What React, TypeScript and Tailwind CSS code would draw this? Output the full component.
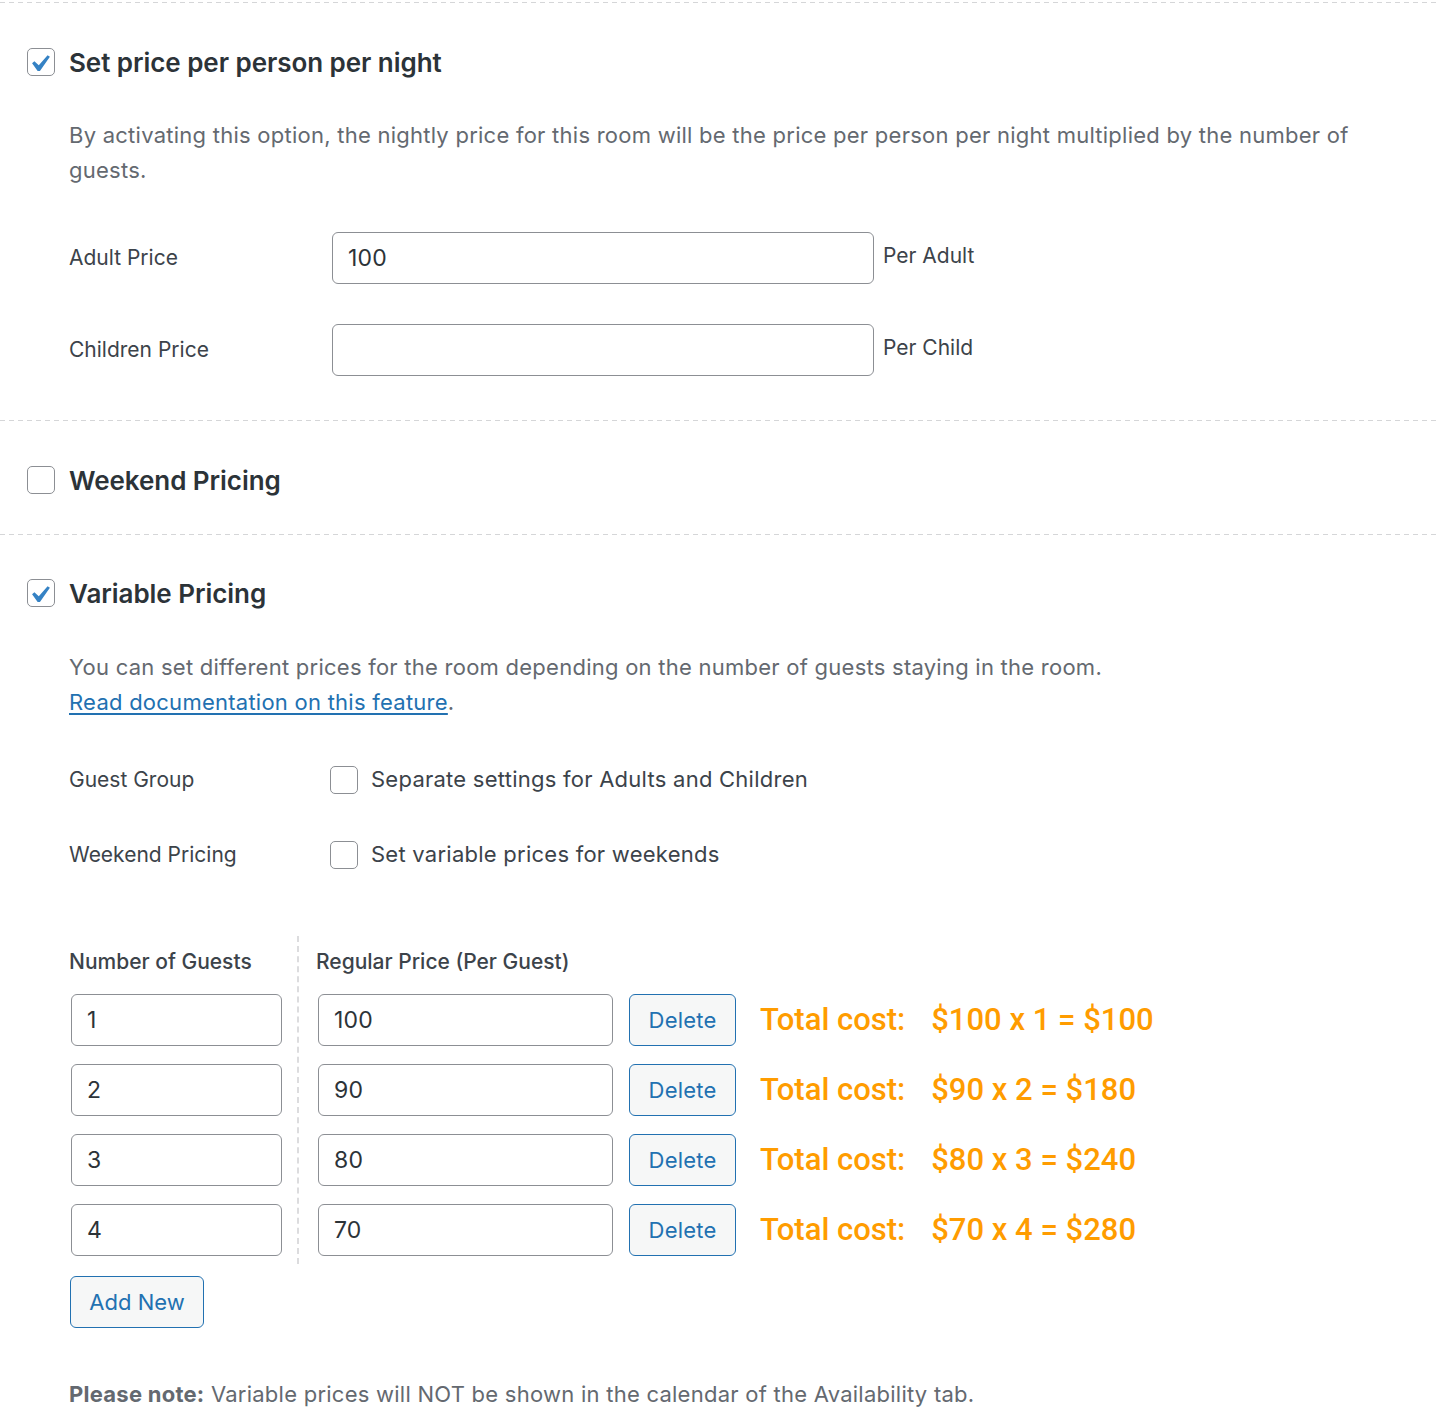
import React from "react";

const FONT = { fontFamily: "Inter, 'Noto Sans', 'Liberation Sans', sans-serif" };
const COST_FONT = { fontFamily: "Roboto, 'Liberation Sans', sans-serif" };

function Check({ checked }: { checked?: boolean }) {
  return (
    <span className="flex h-[28px] w-[28px] shrink-0 items-center justify-center rounded-[5px] border-[1.5px] border-[#8c8f94] bg-white">
      {checked && (
        <svg width="24" height="24" viewBox="3.98 1.9 14 14">
          <path d="M14.83 4.89l1.34.94-5.81 8.38H9.02L5.78 9.67l1.34-1.25 2.57 2.4z" fill="#3582c4" />
        </svg>
      )}
    </span>
  );
}

function Divider() {
  return <div className="h-[1px] w-full bg-[linear-gradient(to_right,#d5d6d8_55%,transparent_55%)] bg-[length:9px_1px]" />;
}

function SectionHeading({ checked, title }: { checked?: boolean; title: string }) {
  return (
    <div className="flex h-[28px] items-center gap-[14px] pl-[27px]">
      <Check checked={checked} />
      <span className="text-[26px] font-semibold tracking-[-0.05px] text-[#2c3338]">{title}</span>
    </div>
  );
}

function TextBox({ value, className }: { value: string; className: string }) {
  return (
    <div
      className={
        "flex h-[52px] items-center rounded-[6px] border-[1.5px] border-[#8c8f94] bg-white text-[23px] tracking-[0.2px] text-[#2c3338] " +
        className
      }
    >
      {value}
    </div>
  );
}

function PriceRow({ label, value, unit }: { label: string; value: string; unit: string }) {
  return (
    <div className="flex items-center pl-[69px]">
      <span className="w-[263px] text-[21px] text-[#3c434a]">{label}</span>
      <TextBox value={value} className="w-[542px] pl-[15px]" />
      <span className="ml-[9px] -mt-[4px] text-[21px] text-[#3c434a]">{unit}</span>
    </div>
  );
}

function OptionRow({ label, text }: { label: string; text: string }) {
  return (
    <div className="flex h-[28px] items-center pl-[69px]">
      <span className="w-[261px] text-[21px] text-[#3c434a]">{label}</span>
      <Check />
      <span className="ml-[13px] -mt-[2px] text-[22px] tracking-[0.25px] text-[#3c434a]">{text}</span>
    </div>
  );
}

const rows = [
  { guests: "1", price: "100", total: "$100" },
  { guests: "2", price: "90", total: "$180" },
  { guests: "3", price: "80", total: "$240" },
  { guests: "4", price: "70", total: "$280" },
];

export default function App() {
  return (
    <div className="min-h-[1428px] w-[1440px] bg-white" style={FONT}>
      <div className="h-[2px]" />
      <Divider />

      {/* Per-person pricing */}
      <section className="pb-[44px] pt-[45px]">
        <SectionHeading checked title="Set price per person per night" />
        <p className="mt-[42px] w-[1370px] pl-[69px] text-[22px] leading-[35px] tracking-[0.25px] text-[#646970]">
          By activating this option, the nightly price for this room will be the price per person per night multiplied by the number of guests.
        </p>
        <div className="mt-[44px] flex flex-col gap-[40px]">
          <PriceRow label="Adult Price" value="100" unit="Per Adult" />
          <PriceRow label="Children Price" value="" unit="Per Child" />
        </div>
      </section>

      <Divider />

      {/* Weekend pricing */}
      <section className="pb-[40px] pt-[45px]">
        <SectionHeading title="Weekend Pricing" />
      </section>

      <Divider />

      {/* Variable pricing */}
      <section className="pt-[44px]">
        <SectionHeading checked title="Variable Pricing" />
        <div className="mt-[43px] pl-[69px] text-[22px] leading-[35px] tracking-[0.25px] text-[#646970]">
          <p>You can set different prices for the room depending on the number of guests staying in the room.</p>
          <p>
            <a href="#" className="text-[#2271b1] underline underline-offset-[3px]">
              Read documentation on this feature
            </a>
            .
          </p>
        </div>

        <div className="mt-[46px] flex flex-col gap-[47px]">
          <OptionRow label="Guest Group" text="Separate settings for Adults and Children" />
          <OptionRow label="Weekend Pricing" text="Set variable prices for weekends" />
        </div>

        {/* Guest count / price table */}
        <div className="mt-[67px] flex pl-[69px]">
          <div className="flex w-[230px] flex-col border-r-[2px] border-dashed border-[#dcdcde] pb-[8px] pt-[10px]">
            <span className="h-[48px] text-[21px] font-medium text-[#3c434a]">Number of Guests</span>
            <div className="flex flex-col gap-[18px]">
              {rows.map((r) => (
                <TextBox key={r.guests} value={r.guests} className="ml-[2px] w-[211px] pl-[15px]" />
              ))}
            </div>
          </div>
          <div className="flex flex-col pl-[17px] pt-[10px]">
            <span className="h-[48px] text-[21px] font-medium text-[#3c434a]">Regular Price (Per Guest)</span>
            <div className="flex flex-col gap-[18px]">
              {rows.map((r) => (
                <div key={r.guests} className="flex items-center">
                  <TextBox value={r.price} className="ml-[2px] w-[295px] pl-[15px]" />
                  <button className="ml-[16px] h-[52px] w-[107px] rounded-[6px] border-[1.5px] border-[#2271b1] bg-[#f6f7f7] text-[22px] tracking-[0.2px] text-[#2271b1]">
                    Delete
                  </button>
                  <span className="ml-[24px] text-[31px] font-medium text-[#ff9c00]" style={COST_FONT}>
                    <span className="mr-[26px]">Total cost:</span>
                    {"$" + r.price} x {r.guests} = {r.total}
                  </span>
                </div>
              ))}
            </div>
          </div>
        </div>

        <button className="ml-[70px] mt-[12px] h-[52px] w-[134px] rounded-[6px] border-[1.5px] border-[#2271b1] bg-[#f6f7f7] text-[22px] text-[#2271b1]">
          Add New
        </button>

        <p className="mt-[50px] pl-[69px] text-[22px] tracking-[0.25px] text-[#646970]">
          <span className="font-bold">Please note:</span> Variable prices will NOT be shown in the calendar of the Availability tab.
        </p>
      </section>
    </div>
  );
}
